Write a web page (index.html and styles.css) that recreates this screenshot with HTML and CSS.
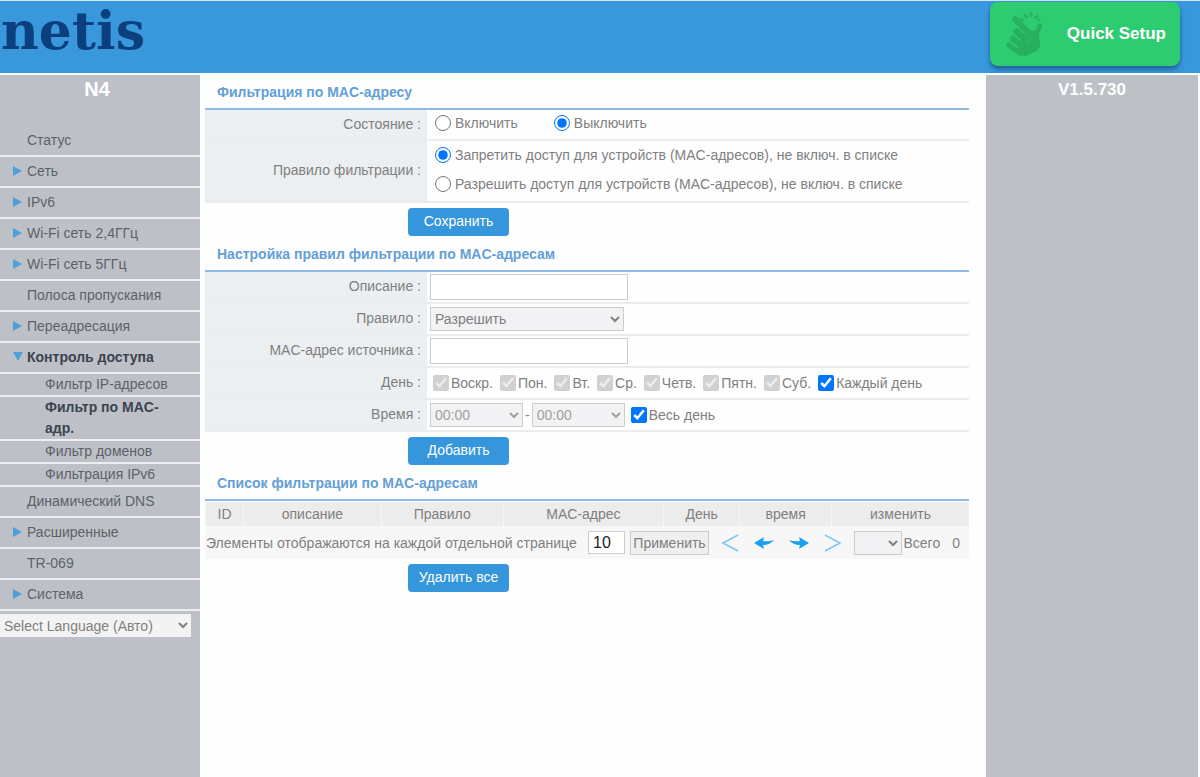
FILE: index.html
```
<!DOCTYPE html>
<html lang="ru">
<head>
<meta charset="utf-8">
<title>netis N4</title>
<link rel="stylesheet" href="styles.css">
</head>
<body>
<header class="top">
  <div class="logo">netis</div>
  <button class="quick" type="button">
    <svg class="quick-icon" viewBox="0 0 40 50" aria-hidden="true">
      <g fill="none" stroke="#27b05f" stroke-linecap="round">
        <path d="M11 10L25 24" stroke-width="6"/>
        <path d="M36 17L31 27" stroke-width="5"/>
        <path d="M13 23L24 32" stroke-width="7"/>
        <path d="M9 30L20 38" stroke-width="6"/>
        <path d="M5 36L16 44" stroke-width="5"/>
      </g>
      <path d="M22 20L29 22L36 21Q34 28 36 33Q37 38 33 42L24 46Q18 49 13 43L16 32Z" fill="#27b05f"/>
      <path d="M9 26L18 33M6 33L15 40M17 22L26 29Q27 34 22 34" fill="none" stroke="#2ecc71" stroke-opacity=".6"/>
      <path d="M17 9L19 12M20 5L23 9M27 3L27 8M34 6L31 10M36 10L34 12" fill="none" stroke="#27b564" stroke-width="3"/>
    </svg>
    <span>Quick Setup</span>
  </button>
</header>
<div class="page">
  <aside class="side">
    <div class="model">N4</div>
    <nav class="nav">
      <a class="item" href="#">Статус</a>
      <a class="item closed" href="#">Сеть</a>
      <a class="item closed" href="#">IPv6</a>
      <a class="item closed" href="#">Wi-Fi сеть 2,4ГГц</a>
      <a class="item closed" href="#">Wi-Fi сеть 5ГГц</a>
      <a class="item" href="#">Полоса пропускания</a>
      <a class="item closed" href="#">Переадресация</a>
      <a class="item open" href="#">Контроль доступа</a>
      <a class="sub" href="#">Фильтр IP-адресов</a>
      <a class="sub current" href="#">Фильтр по MAC-адр.</a>
      <a class="sub" href="#">Фильтр доменов</a>
      <a class="sub" href="#">Фильтрация IPv6</a>
      <a class="item" href="#">Динамический DNS</a>
      <a class="item closed" href="#">Расширенные</a>
      <a class="item" href="#">TR-069</a>
      <a class="item closed" href="#">Система</a>
    </nav>
    <select class="lang" aria-label="Select Language"><option>Select Language (Авто)</option></select>
  </aside>
  <main class="main">
    <section>
      <h2>Фильтрация по MAC-адресу</h2>
      <div class="row">
        <div class="name">Состояние :</div>
        <div class="field states">
          <label><input type="radio" name="state">Включить</label>
          <label><input type="radio" name="state" checked>Выключить</label>
        </div>
      </div>
      <div class="row tall">
        <div class="name">Правило фильтрации :</div>
        <div class="field rules">
          <label><input type="radio" name="rule" checked>Запретить доступ для устройств (MAC-адресов), не включ. в списке</label>
          <label><input type="radio" name="rule">Разрешить доступ для устройств (MAC-адресов), не включ. в списке</label>
        </div>
      </div>
      <button class="action" type="button">Сохранить</button>
    </section>
    <section>
      <h2>Настройка правил фильтрации по MAC-адресам</h2>
      <div class="row entry">
        <label class="name" for="desc">Описание :</label>
        <div class="field"><input class="text" id="desc" type="text"></div>
      </div>
      <div class="row entry">
        <label class="name" for="policy">Правило :</label>
        <div class="field"><select class="policy" id="policy"><option>Разрешить</option></select></div>
      </div>
      <div class="row entry">
        <label class="name" for="mac">MAC-адрес источника :</label>
        <div class="field"><input class="text" id="mac" type="text"></div>
      </div>
      <div class="row entry">
        <div class="name">День :</div>
        <div class="field days">
          <label><input type="checkbox" checked disabled>Воскр.</label>
          <label><input type="checkbox" checked disabled>Пон.</label>
          <label><input type="checkbox" checked disabled>Вт.</label>
          <label><input type="checkbox" checked disabled>Ср.</label>
          <label><input type="checkbox" checked disabled>Четв.</label>
          <label><input type="checkbox" checked disabled>Пятн.</label>
          <label><input type="checkbox" checked disabled>Суб.</label>
          <label><input type="checkbox" checked>Каждый день</label>
        </div>
      </div>
      <div class="row entry">
        <div class="name">Время :</div>
        <div class="field times">
          <select class="time" aria-label="Начало" disabled><option>00:00</option></select>
          <span>-</span>
          <select class="time" aria-label="Конец" disabled><option>00:00</option></select>
          <label class="allday"><input type="checkbox" checked>Весь день</label>
        </div>
      </div>
      <button class="action" type="button">Добавить</button>
    </section>
    <section>
      <h2>Список фильтрации по MAC-адресам</h2>
      <table class="list">
        <colgroup><col class="c1"><col class="c2"><col class="c3"><col class="c4"><col class="c5"><col class="c6"><col class="c7"></colgroup>
        <thead>
          <tr><th>ID</th><th>описание</th><th>Правило</th><th>MAC-адрес</th><th>День</th><th>время</th><th>изменить</th></tr>
        </thead>
      </table>
      <div class="pager">
        <label class="per-label" for="per">Элементы отображаются на каждой отдельной странице</label>
        <input class="per" id="per" type="text" value="10">
        <button class="apply" type="button">Применить</button>
        <div class="arrows">
          <button type="button" aria-label="Первая"><svg width="18" height="18" viewBox="0 0 18 18"><path d="M17 1L2 9L17 17" fill="none" stroke="#7cc6f5" stroke-width="1.5"/></svg></button>
          <button type="button" aria-label="Назад"><svg width="20" height="18" viewBox="0 0 20 18"><path d="M0 9L10 3L9 7Q15 8 20 6Q16 11 9 11L10 15Z" fill="#1c9ff0"/></svg></button>
          <button type="button" aria-label="Вперёд"><svg width="20" height="18" viewBox="0 0 20 18"><path d="M20 9L10 3L11 7Q5 8 0 6Q4 11 11 11L10 15Z" fill="#1c9ff0"/></svg></button>
          <button type="button" aria-label="Последняя"><svg width="18" height="18" viewBox="0 0 18 18"><path d="M1 1L16 9L1 17" fill="none" stroke="#7cc6f5" stroke-width="1.5"/></svg></button>
        </div>
        <select class="goto" aria-label="Страница"></select>
        <span class="total">Всего</span><span>0</span>
      </div>
      <button class="action" type="button">Удалить все</button>
    </section>
  </main>
  <aside class="info">V1.5.730</aside>
</div>
</body>
</html>
```
FILE: styles.css
```
* { box-sizing: border-box; }
body {
  margin: 0;
  min-height: 100vh;
  display: flex;
  flex-direction: column;
  background: #fefefe;
  color: #808080;
  font: 14px/20px "Liberation Sans", Arial, sans-serif;
}
input, select, button { margin: 0; font: inherit; color: inherit; }
.top {
  height: 73px;
  display: flex;
  justify-content: space-between;
  align-items: flex-start;
  padding: 1px 20px 0 1px;
  background: #3998dc;
  border-top: 1px solid #d5e9f8;
}
.logo { color: #0b3f7e; font: bold 52px/58px "DejaVu Serif", serif; }
.quick {
  display: flex;
  align-items: center;
  justify-content: space-between;
  width: 190px;
  height: 64px;
  padding: 0 14px;
  border: 0;
  border-radius: 8px;
  background: #2ecc71;
  box-shadow: 0 3px 5px #1f5c96;
  color: #fff;
  font-weight: bold;
  font-size: 17px;
}
.quick-icon { width: 40px; height: 50px; }
.page { flex: 1; display: flex; padding: 2px 2px 0 0; }
.side, .info { background: #bdc1c7; }
.side { width: 200px; flex: none; }
.model, .info { color: #fff; font-weight: bold; text-align: center; }
.model { height: 51px; padding-right: 6px; font-size: 20px; line-height: 28px; }
.info { width: 212px; flex: none; font-size: 17px; line-height: 29px; }
.nav { display: flex; flex-direction: column; }
.nav a { color: #5c6167; text-decoration: none; border-bottom: 2px solid #eceef0; }
.item { position: relative; padding-left: 27px; line-height: 29px; }
.nav .open, .nav .current { color: #3b4350; font-weight: bold; }
.closed::before, .open::before {
  content: "";
  position: absolute;
  left: 13px;
  top: 9px;
  border: 5px solid transparent;
}
.closed::before { border-left: 9px solid #4f9fdb; border-right: 0; }
.open::before { border-top: 9px solid #4f9fdb; border-bottom: 0; }
.sub { padding: 0 30px 0 45px; line-height: 21px; }
.lang {
  display: block;
  width: 191px;
  height: 23px;
  margin-top: 3px;
  border: 0;
  background-color: #f3f3f4;
}
.main { flex: 1; min-width: 0; padding: 0 17px 0 5px; }
h2 {
  margin: 0;
  height: 35px;
  padding-left: 12px;
  border-bottom: 2px solid #8dbbe3;
  color: #649fd8;
  font-size: 14px;
  line-height: 34px;
}
.row { display: flex; min-height: 31px; border-bottom: 2px solid #ececee; }
.row.tall { min-height: 62px; }
.row.entry { min-height: 32px; }
.name {
  width: 222px;
  flex: none;
  display: flex;
  align-items: center;
  justify-content: flex-end;
  padding: 0 6px 2px 0;
  background: #eceff1;
}
.field { flex: 1; display: flex; align-items: center; padding-left: 3px; }
.field label { display: flex; align-items: center; white-space: nowrap; }
input[type="radio"], input[type="checkbox"] { width: 16px; height: 16px; flex: none; }
input[type="radio"] { margin-right: 4px; }
input[type="checkbox"] { margin-right: 2px; }
.states { gap: 36px; padding: 0 0 3px 8px; }
.rules { flex-direction: column; align-items: flex-start; justify-content: center; gap: 9px; padding: 0 0 3px 8px; }
.text { width: 198px; height: 26px; border: 1px solid #ccc; background: #fff; }
.policy, .time, .goto { height: 24px; padding: 0; border: 1px solid #ccc; border-radius: 0; background-color: #f2f1f3; }
.policy { width: 194px; }
.time { width: 93px; color: #a0a0a0; opacity: 1; }
.times { gap: 2px; }
.times .allday { margin-left: 4px; }
.days { gap: 7px; padding-left: 6px; }
.action {
  display: block;
  width: 101px;
  height: 28px;
  margin: 5px 0 1px 203px;
  padding: 0 0 2px;
  border: 0;
  border-radius: 4px;
  background: #3596dc;
  color: #fff;
}
.list { width: 100%; table-layout: fixed; border-collapse: collapse; margin-top: 1px; }
.c1 { width: 5%; }
.c2 { width: 18%; }
.c3 { width: 16%; }
.c4 { width: 21%; }
.c5 { width: 10%; }
.c6 { width: 12%; }
th { height: 24px; padding: 0; background: #ececed; font-weight: normal; border-left: 1px solid #f6f6f7; }
.pager { display: flex; align-items: center; height: 33px; padding: 0 9px 0 1px; background: #f7f7f8; white-space: nowrap; }
.per-label { min-width: 379px; }
.per { width: 37px; height: 23px; margin-left: 3px; padding: 0 4px; border: 1px solid #ccc; background: #fff; color: #222; font-size: 16px; }
.apply { width: 79px; height: 24px; margin-left: 5px; padding: 0; border: 1px solid #ccc; background: #efefef; }
.arrows { flex: 1; display: flex; justify-content: space-between; padding: 0 12px; }
.arrows button { display: flex; padding: 0; border: 0; background: none; }
.goto { width: 48px; }
.total { margin: 0 12px 0 1px; }
```
